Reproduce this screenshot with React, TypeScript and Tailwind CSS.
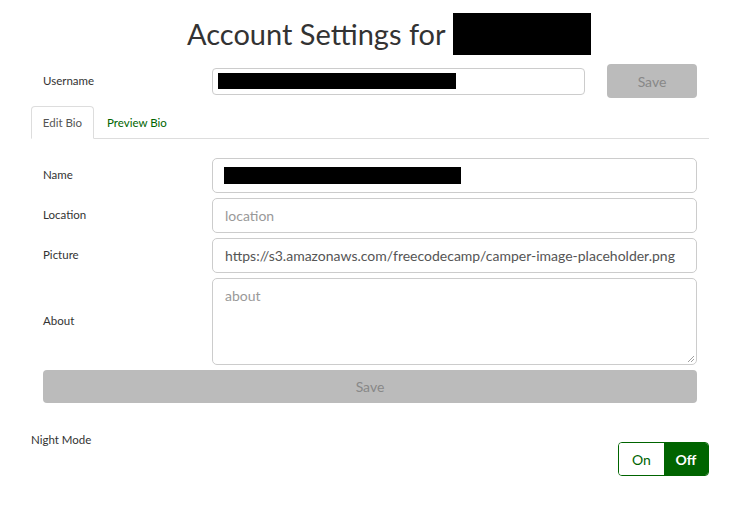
import React from "react";

export default function App() {
  const lato = { fontFamily: "Lato, 'Noto Sans', sans-serif" };
  return (
    <div className="w-[736px] h-[507px] bg-white text-[#333]" style={lato}>
      <div className="flex items-center pl-[187px] pt-[13px] h-[55px]">
        <h1 className="text-[29px] leading-[42px] font-normal text-[#333] mr-[7px]">Account Settings for</h1>
        <div className="w-[138px] h-[42px] bg-black" />
      </div>

      <div className="ml-[43px] w-[654px] flex items-center mt-[9px] h-[34px]">
        <div className="w-[169px] text-[11.5px]">Username</div>
        <div className="w-[373px] h-[27px] border border-[#ccc] rounded-[4px] flex items-center pl-[5px]">
          <div className="w-[238px] h-[16px] bg-black" />
        </div>
        <button className="ml-[22px] w-[90px] h-[34px] rounded-[4px] bg-[#bbbbbb] text-[#888] text-[14px]">Save</button>
      </div>

      <div className="ml-[31px] w-[678px] mt-[8px] flex border-b border-[#ddd] h-[33px]">
        <div className="w-[63px] h-[33px] border border-[#ddd] border-b-white rounded-t-[4px] bg-white flex items-center justify-center text-[11.5px] text-[#555] -mb-px">Edit Bio</div>
        <div className="ml-[13px] h-[33px] flex items-center text-[11.5px] text-[#006400]">Preview Bio</div>
      </div>

      <div className="ml-[43px] w-[654px] mt-[19px] flex flex-col gap-[5px]">
        <div className="flex items-center">
          <div className="w-[169px] text-[11.5px] -mt-[2px]">Name</div>
          <div className="flex-1 h-[35px] border border-[#ccc] rounded-[5px] flex items-center pl-[11px]">
            <div className="w-[237px] h-[17px] bg-black" />
          </div>
        </div>
        <div className="flex items-center">
          <div className="w-[169px] text-[11.5px] -mt-[2px]">Location</div>
          <div className="flex-1 h-[35px] border border-[#ccc] rounded-[5px] flex items-center pl-[12px] text-[14px] text-[#999]">location</div>
        </div>
        <div className="flex items-center">
          <div className="w-[169px] text-[11.5px] -mt-[2px]">Picture</div>
          <div className="flex-1 h-[35px] border border-[#ccc] rounded-[5px] flex items-center pl-[12px] text-[14px] text-[#555] whitespace-nowrap overflow-hidden">https://s3.amazonaws.com/freecodecamp/camper-image-placeholder.png</div>
        </div>
        <div className="flex items-center">
          <div className="w-[169px] text-[11.5px] -mt-[2px]">About</div>
          <div className="relative flex-1 h-[87px] border border-[#ccc] rounded-[5px] pl-[12px] pt-[6px] text-[14px] text-[#999]">
            about
            <svg className="absolute right-[1px] bottom-[1px]" width="8" height="8" viewBox="0 0 8 8">
              <line x1="1" y1="7" x2="7" y2="1" stroke="#888" strokeWidth="0.8" />
              <line x1="4" y1="7" x2="7" y2="4" stroke="#888" strokeWidth="0.8" />
            </svg>
          </div>
        </div>
        <button className="w-full h-[33px] rounded-[4px] bg-[#bbbbbb] text-[#888] text-[14px]">Save</button>
      </div>

      <div className="ml-[31px] w-[678px] mt-[27px] flex justify-between">
        <div className="text-[11.5px] mt-[2px] leading-[16px]">Night Mode</div>
        <div className="mt-[12px] flex h-[34px] w-[91px] rounded-[4px] border border-[#006400] overflow-hidden text-[14px]">
          <div className="w-[45px] flex items-center justify-center bg-white text-[#006400]">On</div>
          <div className="flex-1 flex items-center justify-center bg-[#006400] text-white font-bold">Off</div>
        </div>
      </div>
    </div>
  );
}
